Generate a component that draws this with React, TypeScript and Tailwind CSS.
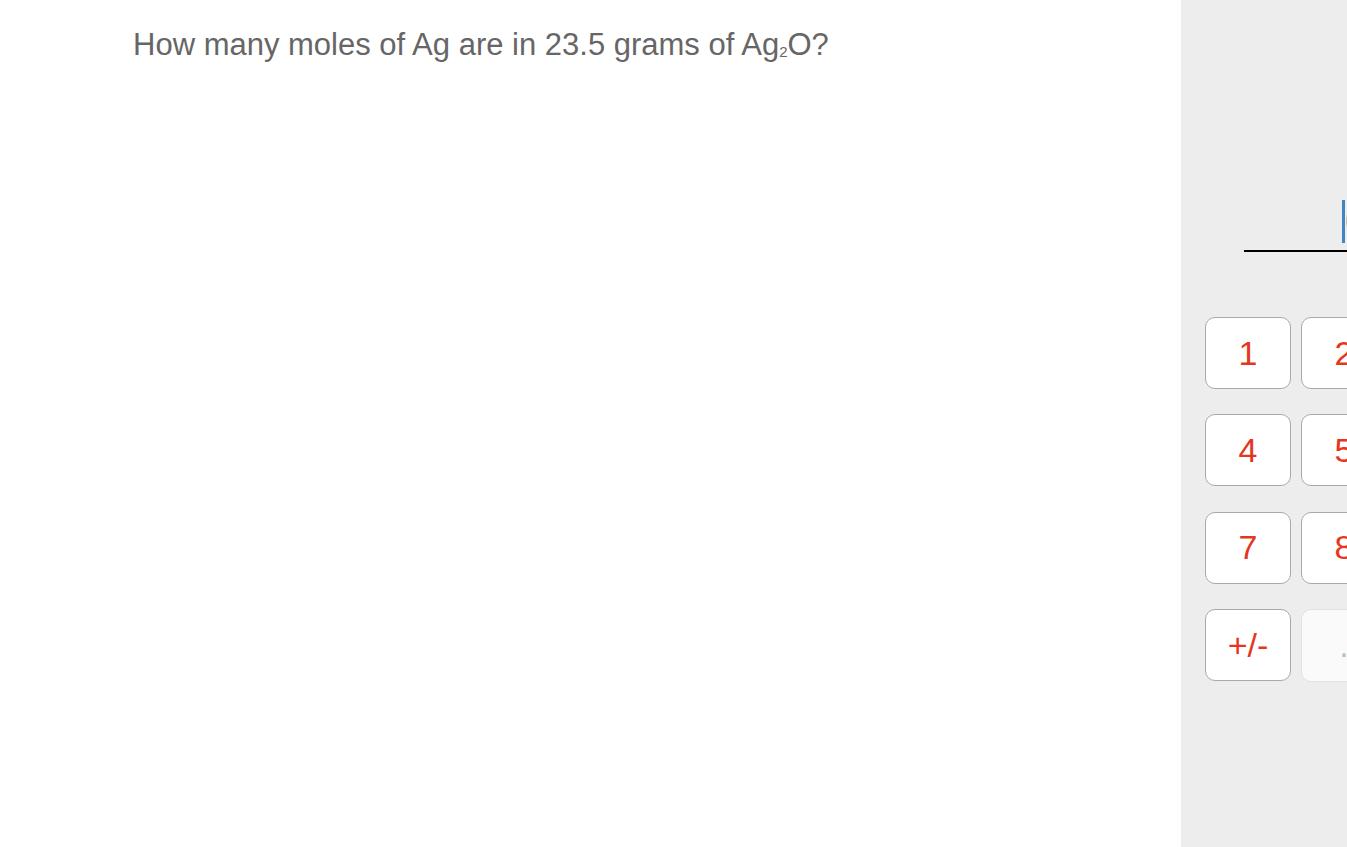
const KEYS = ['1', '2', '3', '4', '5', '6', '7', '8', '9', '+/-', '.', '0']

function Keypad() {
  return (
    <div className="grid w-[278px] shrink-0 grid-cols-[86px_86px_86px] gap-x-[10px] gap-y-[25.4px]">
      {KEYS.map((k) => {
        const disabled = k === '.'
        return (
          <button
            key={k}
            className={
              disabled
                ? 'flex h-[73px] items-center justify-center rounded-[10px] border border-[#e2e2e2] bg-[#fafafa] text-[34px] text-[#bdbdbd]'
                : 'flex h-[72px] items-center justify-center rounded-[10px] border border-[#a9a9a9] bg-white text-[34px] text-[#e5371f]'
            }
          >
            {k}
          </button>
        )
      })}
    </div>
  )
}

export default function App() {
  return (
    <div className="flex h-[847px] w-[1347px] overflow-hidden bg-white font-['Liberation_Sans',Arial,sans-serif]">
      <main className="w-[1181px] shrink-0 pl-[133px] pt-[25px]">
        <p className="text-[31px] leading-[40px] text-[#666666]">
          How many moles of Ag are in 23.5 grams of Ag<span className="relative top-[2px] text-[15px]">2</span>O?
        </p>
      </main>
      <aside className="flex min-w-0 flex-1 flex-col bg-[#ededed]">
        <div className="ml-[63px] mt-[200px] flex h-[52px] w-[300px] shrink-0 items-start justify-end border-b-2 border-black pr-[179px]">
          <span className="h-[43px] w-[3px] bg-[#3f86c4]" />
          <span className="text-[36px] leading-[43px] text-[#9a9a9a]">0</span>
        </div>
        <div className="ml-[24px] mt-[65px]">
          <Keypad />
        </div>
      </aside>
    </div>
  )
}
